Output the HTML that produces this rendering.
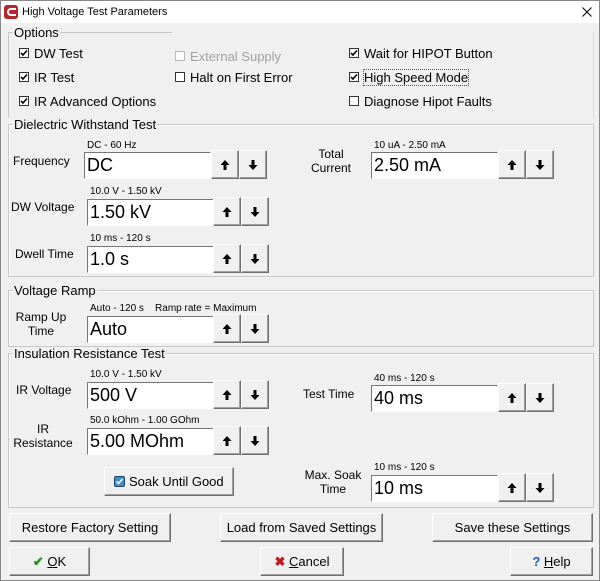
<!DOCTYPE html><html><head><style>
*{box-sizing:border-box;margin:0;padding:0}
body{width:600px;height:581px;background:#f0f0f0;font-family:"Liberation Sans",sans-serif;font-size:12px;color:#000;position:relative;overflow:hidden;border:1px solid #888}
.a{position:absolute;white-space:nowrap}
.title{left:0;top:0;width:598px;height:22px;background:#fff}
.gb{position:absolute;border:1px solid #c8c8c8;box-shadow:inset 1px 1px 0 #fff}
.gt{position:absolute;background:#f0f0f0;font-size:13px;padding:0 1px;line-height:14px}
.cb{position:absolute;width:10px;height:10px;border:1px solid #333;background:#fff}
.cb svg{position:absolute;left:0;top:0}
.lbl{position:absolute;font-size:13px;line-height:15px;white-space:nowrap}
.ed{position:absolute;height:27px;width:127px;background:#fff;border-top:1px solid #777;border-left:1px solid #777;border-bottom:1px solid #fff;border-right:1px solid #fff;font-size:18px;line-height:25px;padding-left:2px}
.sp{position:absolute;width:28px;height:29px;background:#f0f0f0;border:1px solid #fff;border-right-color:#707070;border-bottom-color:#707070;box-shadow:inset -1px -1px 0 #a0a0a0}
.sp svg{position:absolute;left:8px;top:8px}
.rg{position:absolute;font-size:10px;line-height:11px;white-space:nowrap}
.fl{position:absolute;font-size:12px;line-height:14px;text-align:center;white-space:nowrap}
.bt{position:absolute;height:29px;background:#f0f0f0;border:1px solid #fff;border-right-color:#707070;border-bottom-color:#707070;box-shadow:inset -1px -1px 0 #a0a0a0;font-size:13px;text-align:center;line-height:27px}
</style></head><body>
<svg width="0" height="0" style="position:absolute"><defs>
<symbol id="up" viewBox="0 0 10 12"><path d="M5 1 L9.5 6 L6.5 6 L6.5 11 L3.5 11 L3.5 6 L0.5 6 Z" fill="#000"/></symbol>
<symbol id="dn" viewBox="0 0 10 12"><path d="M5 11 L9.5 6 L6.5 6 L6.5 1 L3.5 1 L3.5 6 L0.5 6 Z" fill="#000"/></symbol>
<symbol id="ck" viewBox="0 0 8 8"><path d="M1 4 L3 6 L7 1.5" stroke="#000" stroke-width="1.6" fill="none"/></symbol>
</defs></svg>
<div class="a title"></div>
<div class="a" style="left:3px;top:4px;width:14px;height:14px;background:#b4262b;border-radius:3px"></div>
<div class="a" style="left:6px;top:7px;width:9px;height:8px;border:2px solid #fff;border-right:none;border-radius:4px 0 0 4px"></div>
<div class="a" style="left:21px;top:4px;font-size:11px;line-height:14px">High Voltage Test Parameters</div>
<svg class="a" style="left:581px;top:6px" width="10" height="10"><path d="M0.5 0.5L9.5 9.5M9.5 0.5L0.5 9.5" stroke="#000" stroke-width="1"/></svg>

<div class="a" style="left:7px;top:31px;width:1px;height:86px;background:#c8c8c8"></div>
<div class="a" style="left:7px;top:31px;width:164px;height:1px;background:#c8c8c8"></div>
<div class="a" style="left:592px;top:31px;width:1px;height:86px;background:#ddd"></div>
<div class="gt" style="left:12px;top:25px">Options</div>
<div class="cb" style="left:18px;top:47px"><svg width="8" height="8"><use href="#ck"/></svg></div><div class="lbl" style="left:33px;top:45px">DW Test</div>
<div class="cb" style="left:18px;top:71px"><svg width="8" height="8"><use href="#ck"/></svg></div><div class="lbl" style="left:33px;top:69px">IR Test</div>
<div class="cb" style="left:18px;top:95px"><svg width="8" height="8"><use href="#ck"/></svg></div><div class="lbl" style="left:33px;top:93px">IR Advanced Options</div>
<div class="cb" style="left:174px;top:50px;border-color:#bbb"></div><div class="lbl" style="left:189px;top:48px;color:#a0a0a0">External Supply</div>
<div class="cb" style="left:174px;top:71px"></div><div class="lbl" style="left:189px;top:69px">Halt on First Error</div>
<div class="cb" style="left:348px;top:47px"><svg width="8" height="8"><use href="#ck"/></svg></div><div class="lbl" style="left:363px;top:45px">Wait for HIPOT Button</div>
<div class="cb" style="left:348px;top:71px"><svg width="8" height="8"><use href="#ck"/></svg></div><div class="lbl" style="left:363px;top:69px;outline:1px dotted #555">High Speed Mode</div>
<div class="cb" style="left:348px;top:95px"></div><div class="lbl" style="left:363px;top:93px">Diagnose Hipot Faults</div>

<div class="gb" style="left:7px;top:123px;width:586px;height:153px"></div>
<div class="gt" style="left:12px;top:117px">Dielectric Withstand Test</div>
<div class="fl" style="left:12px;top:153px">Frequency</div>
<div class="rg" style="left:86px;top:139px">DC - 60 Hz</div>
<div class="ed" style="left:83px;top:151px">DC</div><div class="sp" style="left:210px;top:149px"><svg width="10" height="12"><use href="#up"/></svg></div><div class="sp" style="left:238px;top:149px"><svg width="10" height="12"><use href="#dn"/></svg></div>
<div class="fl" style="left:10px;top:199px">DW Voltage</div>
<div class="rg" style="left:89px;top:185px">10.0 V - 1.50 kV</div>
<div class="ed" style="left:86px;top:198px">1.50 kV</div><div class="sp" style="left:212px;top:196px"><svg width="10" height="12"><use href="#up"/></svg></div><div class="sp" style="left:240px;top:196px"><svg width="10" height="12"><use href="#dn"/></svg></div>
<div class="fl" style="left:14px;top:246px">Dwell Time</div>
<div class="rg" style="left:89px;top:232px">10 ms - 120 s</div>
<div class="ed" style="left:86px;top:245px">1.0 s</div><div class="sp" style="left:212px;top:243px"><svg width="10" height="12"><use href="#up"/></svg></div><div class="sp" style="left:240px;top:243px"><svg width="10" height="12"><use href="#dn"/></svg></div>
<div class="fl" style="left:308px;top:146px;width:44px">Total<br>Current</div>
<div class="rg" style="left:373px;top:139px">10 uA - 2.50 mA</div>
<div class="ed" style="left:370px;top:151px">2.50 mA</div><div class="sp" style="left:497px;top:149px"><svg width="10" height="12"><use href="#up"/></svg></div><div class="sp" style="left:525px;top:149px"><svg width="10" height="12"><use href="#dn"/></svg></div>

<div class="gb" style="left:7px;top:289px;width:586px;height:57px"></div>
<div class="gt" style="left:12px;top:283px">Voltage Ramp</div>
<div class="fl" style="left:14px;top:309px;width:52px">Ramp Up<br>Time</div>
<div class="rg" style="left:89px;top:302px">Auto - 120 s &nbsp;&nbsp; Ramp rate = Maximum</div>
<div class="ed" style="left:86px;top:315px">Auto</div><div class="sp" style="left:212px;top:313px"><svg width="10" height="12"><use href="#up"/></svg></div><div class="sp" style="left:240px;top:313px"><svg width="10" height="12"><use href="#dn"/></svg></div>

<div class="gb" style="left:7px;top:352px;width:586px;height:155px"></div>
<div class="gt" style="left:12px;top:346px">Insulation Resistance Test</div>
<div class="fl" style="left:15px;top:382px">IR Voltage</div>
<div class="rg" style="left:89px;top:368px">10.0 V - 1.50 kV</div>
<div class="ed" style="left:86px;top:381px">500 V</div><div class="sp" style="left:212px;top:379px"><svg width="10" height="12"><use href="#up"/></svg></div><div class="sp" style="left:240px;top:379px"><svg width="10" height="12"><use href="#dn"/></svg></div>
<div class="fl" style="left:12px;top:421px;width:60px">IR<br>Resistance</div>
<div class="rg" style="left:89px;top:414px">50.0 kOhm - 1.00 GOhm</div>
<div class="ed" style="left:86px;top:427px">5.00 MOhm</div><div class="sp" style="left:212px;top:425px"><svg width="10" height="12"><use href="#up"/></svg></div><div class="sp" style="left:240px;top:425px"><svg width="10" height="12"><use href="#dn"/></svg></div>
<div class="fl" style="left:302px;top:386px">Test Time</div>
<div class="rg" style="left:373px;top:372px">40 ms - 120 s</div>
<div class="ed" style="left:370px;top:384px">40 ms</div><div class="sp" style="left:497px;top:382px"><svg width="10" height="12"><use href="#up"/></svg></div><div class="sp" style="left:525px;top:382px"><svg width="10" height="12"><use href="#dn"/></svg></div>
<div class="bt" style="left:103px;top:466px;width:130px"><span style="display:inline-block;width:11px;height:11px;background:#3a8fd0;border:1px solid #246;border-radius:2px;vertical-align:-1px;position:relative"><svg width="9" height="9" style="position:absolute;left:0;top:0"><path d="M1.5 4.5 L3.5 6.5 L7.5 2" stroke="#fff" stroke-width="1.6" fill="none"/></svg></span> Soak Until Good</div>
<div class="fl" style="left:300px;top:467px;width:64px">Max. Soak<br>Time</div>
<div class="rg" style="left:373px;top:461px">10 ms - 120 s</div>
<div class="ed" style="left:370px;top:474px">10 ms</div><div class="sp" style="left:497px;top:472px"><svg width="10" height="12"><use href="#up"/></svg></div><div class="sp" style="left:525px;top:472px"><svg width="10" height="12"><use href="#dn"/></svg></div>

<div class="bt" style="left:8px;top:512px;width:162px">Restore Factory Setting</div>
<div class="bt" style="left:219px;top:512px;width:163px">Load from Saved Settings</div>
<div class="bt" style="left:431px;top:512px;width:161px">Save these Settings</div>
<div class="bt" style="left:8px;top:546px;width:81px"><span style="color:#1a9a1a;font-weight:bold">✔</span> <u>O</u>K</div>
<div class="bt" style="left:259px;top:546px;width:84px"><span style="color:#c0181a;font-weight:bold">✖</span> <u>C</u>ancel</div>
<div class="bt" style="left:509px;top:546px;width:83px"><span style="color:#1a5fc0;font-weight:bold">?</span> <u>H</u>elp</div>
</body></html>
